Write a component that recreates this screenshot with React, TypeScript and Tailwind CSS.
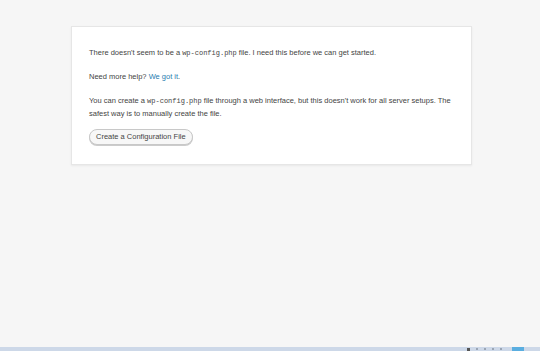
import React from "react";

export default function App() {
  const mono = "font-['Liberation_Mono',monospace] text-[7px] leading-none";
  return (
    <div className="h-[351px] flex flex-col bg-[#f6f6f6] font-['Liberation_Sans',Arial,sans-serif] text-[#444] overflow-hidden">
      <div className="flex-1 pt-[26px]">
        <div className="ml-[71px] w-[401px] bg-white border border-[#e6e6e6] shadow-[0_1px_2px_rgba(0,0,0,0.06)] px-[17px] pt-[19px] pb-[19px] text-[7.5px] leading-[13px]">
          <p>
            There doesn't seem to be a <code className={mono}>wp-config.php</code> file. I need this before we can get started.
          </p>
          <p className="mt-[11px]">
            Need more help? <a className="text-[#2a7db0]">We got it</a>.
          </p>
          <p className="mt-[11px]">
            You can create a <code className={mono}>wp-config.php</code> file through a web interface, but this doesn't work for all server setups. The safest way is to manually create the file.
          </p>
          <div className="mt-[9px]">
            <button className="h-[16px] px-[6px] rounded-full border border-[#c8c8c8] bg-[#f7f7f7] text-[7.5px] leading-[14px] text-[#444] shadow-[0_1px_0_#ccc]">
              Create a Configuration File
            </button>
          </div>
        </div>
      </div>
      <div className="h-[4px] bg-[#cdd8e8] flex items-center justify-end pr-[16px] gap-[6px]">
        <span className="w-[3px] h-[3px] bg-[#555]" />
        <span className="w-[2px] h-[2px] bg-[#9aa5b5]" />
        <span className="w-[2px] h-[2px] bg-[#9aa5b5]" />
        <span className="w-[2px] h-[2px] bg-[#9aa5b5]" />
        <span className="w-[2px] h-[2px] bg-[#9aa5b5]" />
        <span className="w-[12px] h-[4px] bg-[#5aaee0] ml-[4px]" />
      </div>
    </div>
  );
}
